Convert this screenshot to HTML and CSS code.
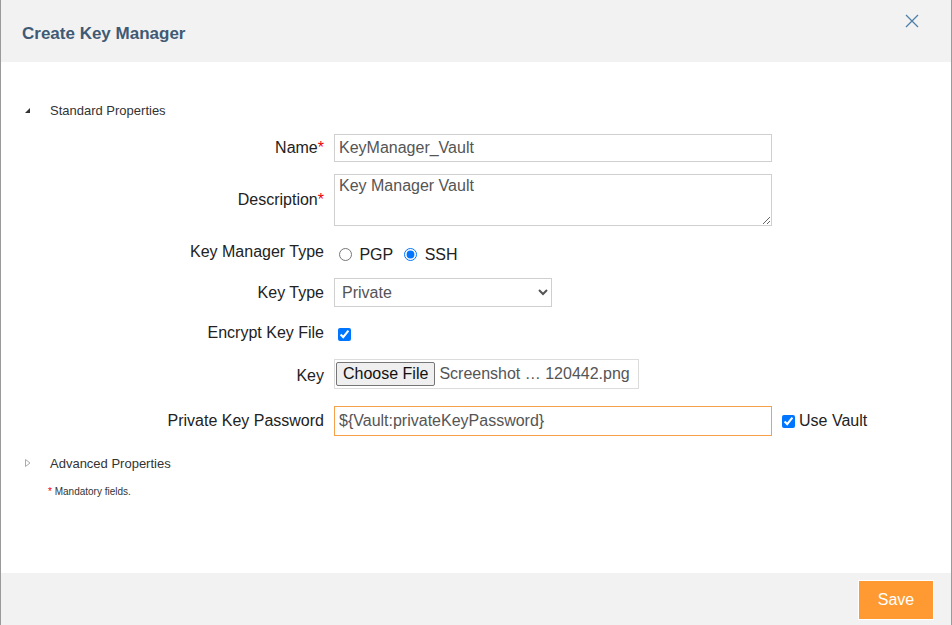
FILE: index.html
```html
<!DOCTYPE html>
<html lang="en">
<head>
    <meta charset="UTF-8">
    <title>Create Key Manager</title>
    <link rel="stylesheet" href="styles.css">
</head>
<body>
    <div class="dialog">
        <div class="dialog-header">
            <h1>Create Key Manager</h1>
            <button class="close" title="Close">
                <svg width="14" height="14" viewBox="0 0 14 14"><path d="M1 1 L13 13 M13 1 L1 13" stroke="#4f7fa8" stroke-width="1.3" fill="none"/></svg>
            </button>
        </div>
        <div class="dialog-body">
            <div class="section-title">
                <svg class="tri" width="7" height="7" viewBox="0 0 7 7"><path d="M6 1 L6 6 L1 6 Z" fill="#333"/></svg>
                Standard Properties
            </div>

            <div class="form">
                <div class="row">
                    <label class="lbl">Name<span class="req">*</span></label>
                    <input class="field" type="text" value="KeyManager_Vault">
                </div>
                <div class="row">
                    <label class="lbl">Description<span class="req">*</span></label>
                    <textarea class="field area">Key Manager Vault</textarea>
                </div>
                <div class="row">
                    <label class="lbl">Key Manager Type</label>
                    <div class="radios">
                        <label><input type="radio" name="kmt"> PGP</label>
                        <label><input type="radio" name="kmt" checked> SSH</label>
                    </div>
                </div>
                <div class="row">
                    <label class="lbl">Key Type</label>
                    <select class="select">
                        <option>Private</option>
                        <option>Public</option>
                    </select>
                </div>
                <div class="row">
                    <label class="lbl">Encrypt Key File</label>
                    <input class="check" type="checkbox" checked>
                </div>
                <div class="row">
                    <label class="lbl lbl-key">Key</label>
                    <div class="file">
                        <button class="file-btn">Choose File</button>
                        <span class="file-name">Screenshot … 120442.png</span>
                    </div>
                </div>
                <div class="row row-pw">
                    <label class="lbl">Private Key Password</label>
                    <input class="field active" type="text" value="${Vault:privateKeyPassword}">
                    <label class="vault"><input type="checkbox" checked>Use Vault</label>
                </div>
            </div>

            <div class="section-title adv">
                <svg class="tri" width="7" height="10" viewBox="0 0 7 10"><path d="M1.5 1.5 L6 5 L1.5 8.5 Z" fill="none" stroke="#aaa" stroke-width="1"/></svg>
                Advanced Properties
            </div>
            <div class="mandatory"><span class="req">*</span> Mandatory fields.</div>
        </div>
        <div class="dialog-footer">
            <button class="btn-save">Save</button>
        </div>
    </div>
</body>
</html>
```

FILE: styles.css
```css
body {
    margin: 0;
    padding: 0;
    font-family: "Liberation Sans", Arial, sans-serif;
    background-color: #fff;
}
.dialog {
    width: 950px;
    height: 625px;
    border-left: 1px solid #9a9a9a;
    border-right: 1px solid #9a9a9a;
    display: flex;
    flex-direction: column;
}
.dialog-header {
    height: 62px;
    background-color: #f2f2f2;
    display: flex;
    align-items: flex-start;
    justify-content: space-between;
}
.dialog-header h1 {
    margin: 24px 0 0 21px;
    font-size: 17px;
    font-weight: bold;
    color: #3f5a74;
}
.close {
    border: none;
    background: none;
    padding: 0;
    margin: 14px 32px 0 0;
    width: 14px;
    height: 14px;
    cursor: pointer;
}
.close svg {
    display: block;
}
.dialog-body {
    flex: 1;
    background-color: #fff;
    padding-top: 40px;
}
.section-title {
    display: flex;
    align-items: center;
    font-size: 13px;
    color: #333;
    padding-left: 23px;
    height: 16px;
}
.tri {
    display: block;
    margin-right: 19px;
}
.form {
    margin-top: 16px;
}
.row {
    display: flex;
    align-items: center;
    gap: 10px;
    margin-bottom: 12px;
    min-height: 28px;
}
.lbl {
    width: 323px;
    text-align: right;
    font-size: 16px;
    color: #222;
}
.lbl-key {
    padding-top: 4px;
}
.req {
    color: #e8000d;
}
.field {
    width: 438px;
    height: 28px;
    box-sizing: border-box;
    border: 1px solid #cfcfcf;
    padding: 0 4px;
    font-family: "Liberation Sans", Arial, sans-serif;
    font-size: 16px;
    color: #555;
    outline: none;
}
.area {
    height: 52px;
    padding: 2px 4px;
    resize: both;
}
.active {
    height: 30px;
    border-color: #f7a04c;
}
.radios {
    display: flex;
    gap: 6px;
    font-size: 16px;
    color: #222;
    padding-top: 5px;
}
.radios input {
    margin: 0 3px 0 5px;
    vertical-align: -1px;
}
.select {
    width: 218px;
    height: 29px;
    border: 1px solid #cfcfcf;
    background-color: #fff;
    font-family: "Liberation Sans", Arial, sans-serif;
    font-size: 16px;
    color: #555;
    padding-left: 3px;
    border-radius: 0;
}
.check {
    margin: 2px 0 0 4px;
    width: 13px;
    height: 13px;
}
.file {
    width: 305px;
    height: 30px;
    box-sizing: border-box;
    border: 1px solid #dcdcdc;
    display: flex;
    align-items: center;
    padding-left: 1px;
}
.file-btn {
    height: 24px;
    padding: 0 6px;
    font-family: "Liberation Sans", Arial, sans-serif;
    font-size: 16px;
    color: #111;
    background-color: #efefef;
    border: 1px solid #767676;
    border-radius: 2px;
}
.file-name {
    margin-left: 4px;
    font-size: 16px;
    color: #555;
}
.row-pw {
    margin-top: 17px;
    min-height: 30px;
}
.vault {
    display: flex;
    align-items: center;
    font-size: 16px;
    color: #222;
}
.vault input {
    margin: 0 4px 0 0;
    width: 13px;
    height: 13px;
}
.adv {
    margin-top: 19px;
}
.mandatory {
    margin: 15px 0 0 47px;
    font-size: 10px;
    color: #333;
}
.dialog-footer {
    height: 52px;
    background-color: #f2f2f2;
    display: flex;
    justify-content: flex-end;
    align-items: flex-start;
}
.btn-save {
    margin: 7px 17px 0 0;
    width: 76px;
    height: 40px;
    background-color: #ff9a33;
    color: #fff;
    border: 1px solid #fff;
    font-family: "Liberation Sans", Arial, sans-serif;
    font-size: 16px;
    cursor: pointer;
}
```
